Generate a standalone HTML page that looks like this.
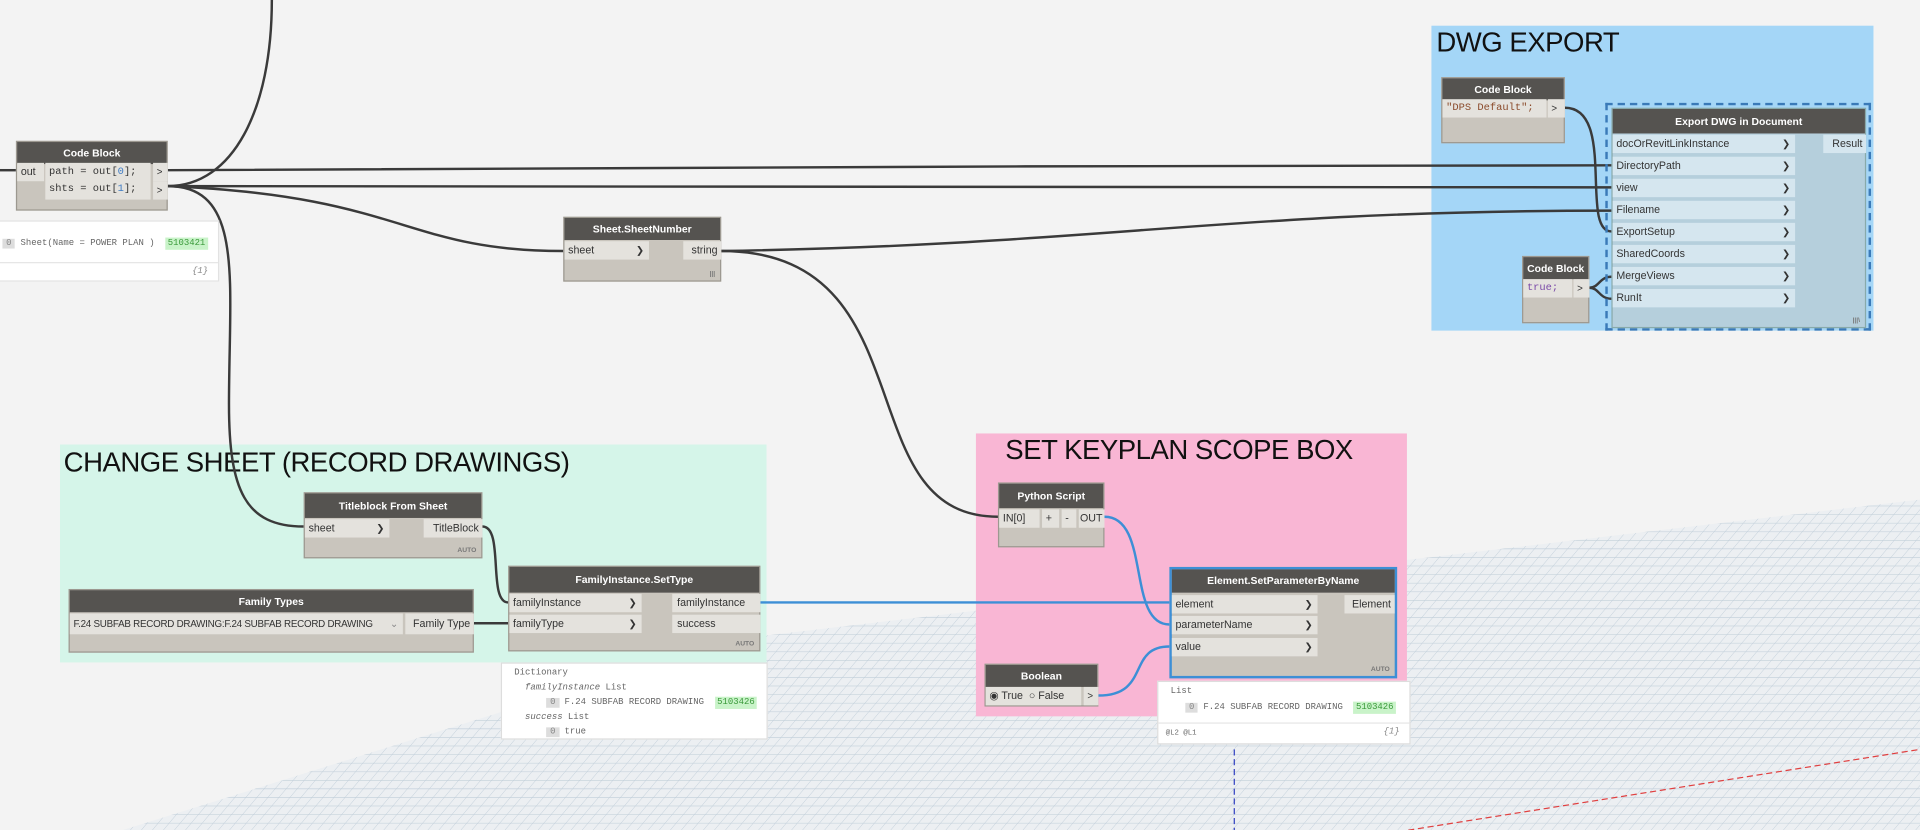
<!DOCTYPE html>
<html><head><meta charset="utf-8"><style>
*{box-sizing:border-box;margin:0;padding:0}
body{width:1920px;height:830px;overflow:hidden;background:#f3f3f3;font-family:"Liberation Sans","DejaVu Sans",sans-serif}
#s{position:absolute;left:0;top:0;width:1568px;height:678px;transform:scale(1.22449);transform-origin:0 0}
.a{position:absolute}
.grp{position:absolute}
.gt{position:absolute;font-size:22.5px;color:#111;white-space:nowrap;letter-spacing:-0.4px}
.n{position:absolute;background:#c9c5bd;border:1px solid #9c9890}
.h{background:#555350;color:#fff;font-weight:bold;font-size:8.5px;text-align:center;height:18px;line-height:18px;white-space:nowrap;overflow:hidden}
.p{position:absolute;background:#e4e2dd;font-size:8.7px;color:#333;line-height:15px;height:15px;padding-left:3px;white-space:nowrap;overflow:hidden}
.ar{position:absolute;right:4px;top:0;font-weight:bold;font-size:8px}
.o{position:absolute;background:#e4e2dd;font-size:8.7px;color:#333;line-height:15px;height:15px;text-align:right;padding-right:3px;white-space:nowrap}
.auto{position:absolute;right:4px;bottom:2px;font-size:5.5px;color:#777;font-weight:bold}
.mono{font-family:"Liberation Mono","DejaVu Sans Mono",monospace}
.pv{position:absolute;background:#fff;border:1px solid #ddd;font-family:"Liberation Mono",monospace;font-size:7.3px;color:#666;white-space:nowrap;overflow:hidden}
.gr{background:#c9f3c9;color:#3a9a3a;padding:1px 2px}
.ix{background:#ddd;color:#888;padding:0 3px}
</style></head><body><div id="s">

<svg class="a" style="left:0;top:0" width="1568" height="678">
<defs><pattern id="g" width="9" height="7" patternUnits="userSpaceOnUse" patternTransform="skewX(-40)"><path d="M0 0H9M0 0V7" stroke="#bfcdd8" stroke-width="0.9" fill="none"/></pattern></defs>
<polygon points="100,678 600,522 1568,408 1568,678" fill="#eceff2"/>
<polygon points="100,678 600,522 1568,408 1568,678" fill="url(#g)"/>
<path d="M1150 678 L1568 612" stroke="#e04040" stroke-width="1" stroke-dasharray="5,3"/>
<path d="M1008 612 V678" stroke="#3040c0" stroke-width="1" stroke-dasharray="5,3"/>
</svg>

<div class="grp" style="left:1169px;top:21px;width:361px;height:249px;background:#a4d6f7"><div class="gt" style="left:4px;top:1px">DWG EXPORT</div></div>
<div class="grp" style="left:49px;top:363px;width:577px;height:178px;background:#d5f5e9"><div class="gt" style="left:3px;top:2px">CHANGE SHEET (RECORD DRAWINGS)</div></div>
<div class="grp" style="left:797px;top:354px;width:352px;height:231px;background:#f9b6d4"><div class="gt" style="left:24px;top:1px">SET KEYPLAN SCOPE BOX</div></div>

<svg class="a" style="left:0;top:0" width="1568" height="678" fill="none" stroke-width="2">
<g stroke="#3a3a3a">
<path d="M222 0 C222 90 190 152 137 152"/>
<path d="M137 152 C200 152 187 230 187 330 C187 400 200 430 248 430"/>
<path d="M0 139 H13"/>
<path d="M137 139 C600 137 900 135 1316 135"/>
<path d="M137 152 C600 152 900 153 1316 153"/>
<path d="M137 152 C330 160 330 205 460 205"/>
<path d="M589 205 C900 200 1000 172 1316 172"/>
<path d="M589 205 C760 205 690 422 815 422"/>
<path d="M1278 88 C1320 88 1290 189 1316 189"/>
<path d="M1298 235 C1306 235 1306 226 1316 226"/>
<path d="M1298 235 C1306 235 1306 244 1316 244"/>
<path d="M394 430 C412 430 398 492 415 492"/>
<path d="M387 509 H415"/>
</g>
<g stroke="#3d8fd6">
<path d="M621 492 H955"/>
<path d="M902 422 C940 422 920 510 955 510"/>
<path d="M897 568 C940 568 920 528 955 528"/>
</g>
</svg>

<div class="n" style="left:13px;top:115px;width:124px;height:57px"><div class="h">Code Block</div>
<div class="p" style="left:0;top:17px;width:22px;height:15px">out</div>
<div class="p mono" style="left:23px;top:17px;width:86px;height:30px;line-height:14px;font-size:8.5px">path = out[<span style="color:#3d7bc4">0</span>];<br>shts = out[<span style="color:#3d7bc4">1</span>];</div>
<div class="p" style="left:111px;top:17px;width:12px;font-size:8px">&gt;</div>
<div class="p" style="left:111px;top:32px;width:12px;font-size:8px">&gt;</div>
</div>
<div class="pv" style="left:-1px;top:180px;width:180px;height:50px;border-color:#e2e2e2">
<div class="a" style="left:2px;top:14px"><span class="ix">0</span> Sheet(Name = POWER PLAN )&nbsp; <span class="gr">5103421</span></div>
<div class="a" style="left:0;top:33px;width:180px;border-top:1px solid #e5e5e5"></div>
<div class="a" style="right:8px;top:37px;color:#888;font-style:italic">{1}</div></div>

<div class="n" style="left:460px;top:177px;width:129px;height:53px"><div class="h">Sheet.SheetNumber</div>
<div class="p" style="left:0;top:19px;width:69px">sheet<span class="ar">❯</span></div>
<div class="o" style="left:97px;top:19px;width:31px">string</div>
<div class="auto">|||</div></div>

<div class="n" style="left:248px;top:402px;width:146px;height:54px"><div class="h" style="height:20px;line-height:20px">Titleblock From Sheet</div>
<div class="p" style="left:0;top:21px;width:69px">sheet<span class="ar">❯</span></div>
<div class="o" style="left:97px;top:21px;width:48px">TitleBlock</div>
<div class="auto">AUTO</div></div>

<div class="n" style="left:56px;top:481px;width:331px;height:52px"><div class="h">Family Types</div>
<div class="p" style="left:0;top:19px;width:272px;height:17px;line-height:17px;font-size:8px;letter-spacing:-0.2px">F.24 SUBFAB RECORD DRAWING:F.24 SUBFAB RECORD DRAWING <span style="position:absolute;right:4px;color:#888">⌄</span></div>
<div class="o" style="left:274px;top:19px;width:56px;height:17px;line-height:17px">Family Type</div></div>

<div class="n" style="left:415px;top:462px;width:206px;height:70px"><div class="h" style="height:21px;line-height:21px">FamilyInstance.SetType</div>
<div class="p" style="left:0;top:22px;width:108px">familyInstance<span class="ar">❯</span></div>
<div class="p" style="left:0;top:39px;width:108px">familyType<span class="ar">❯</span></div>
<div class="o" style="left:133px;top:22px;width:72px;text-align:left;padding-left:4px">familyInstance</div>
<div class="o" style="left:133px;top:39px;width:72px;text-align:left;padding-left:4px">success</div>
<div class="auto">AUTO</div></div>
<div class="pv" style="left:409px;top:541px;width:218px;height:63px;line-height:12px;padding:2px 0 0 10px">Dictionary<br>&nbsp;&nbsp;<i>familyInstance</i> List<br>&nbsp;&nbsp;&nbsp;&nbsp;&nbsp; <span class="ix">0</span> F.24 SUBFAB RECORD DRAWING&nbsp; <span class="gr">5103426</span><br>&nbsp;&nbsp;<i>success</i> List<br>&nbsp;&nbsp;&nbsp;&nbsp;&nbsp; <span class="ix">0</span> true</div>

<div class="n" style="left:1177px;top:63px;width:101px;height:54px"><div class="h">Code Block</div>
<div class="p mono" style="left:0;top:17px;width:85px;color:#8a4a2a;font-size:8.5px">"DPS Default";</div>
<div class="p" style="left:86px;top:17px;width:14px;font-size:8px">&gt;</div></div>

<div class="a" style="left:1311px;top:84px;width:217px;height:186px;border:2px dashed #3a7ab8"></div>
<div class="n" style="left:1316px;top:88px;width:208px;height:180px;background:#b5cfdc;border-color:#8aa"><div class="h" style="height:20px;line-height:20px">Export DWG in Document</div>
<div class="p" style="left:0;top:21px;width:149px;background:#d5e6ef">docOrRevitLinkInstance<span class="ar">❯</span></div>
<div class="p" style="left:0;top:39px;width:149px;background:#d5e6ef">DirectoryPath<span class="ar">❯</span></div>
<div class="p" style="left:0;top:57px;width:149px;background:#d5e6ef">view<span class="ar">❯</span></div>
<div class="p" style="left:0;top:75px;width:149px;background:#d5e6ef">Filename<span class="ar">❯</span></div>
<div class="p" style="left:0;top:93px;width:149px;background:#d5e6ef">ExportSetup<span class="ar">❯</span></div>
<div class="p" style="left:0;top:111px;width:149px;background:#d5e6ef">SharedCoords<span class="ar">❯</span></div>
<div class="p" style="left:0;top:129px;width:149px;background:#d5e6ef">MergeViews<span class="ar">❯</span></div>
<div class="p" style="left:0;top:147px;width:149px;background:#d5e6ef">RunIt<span class="ar">❯</span></div>
<div class="o" style="left:172px;top:21px;width:35px;background:#d5e6ef">Result</div>
<div class="auto">|||\</div></div>

<div class="n" style="left:1243px;top:209px;width:55px;height:55px"><div class="h">Code Block</div>
<div class="p mono" style="left:0;top:18px;width:40px;color:#7a4aa8;font-size:8.5px">true;</div>
<div class="p" style="left:41px;top:18px;width:13px;font-size:8px">&gt;</div></div>

<div class="n" style="left:815px;top:394px;width:87px;height:53px"><div class="h" style="height:20px;line-height:20px">Python Script</div>
<div class="p" style="left:0;top:21px;width:33px">IN[0]</div>
<div class="p" style="left:35px;top:21px;width:14px">+</div>
<div class="p" style="left:51px;top:21px;width:12px">-</div>
<div class="p" style="left:65px;top:21px;width:21px;padding-left:1px">OUT</div></div>

<div class="n" style="left:955px;top:463px;width:186px;height:91px;border:2px solid #3d8fd6"><div class="h" style="height:19px;line-height:19px">Element.SetParameterByName</div>
<div class="p" style="left:0;top:21px;width:119px">element<span class="ar">❯</span></div>
<div class="p" style="left:0;top:38px;width:119px">parameterName<span class="ar">❯</span></div>
<div class="p" style="left:0;top:56px;width:119px">value<span class="ar">❯</span></div>
<div class="o" style="left:141px;top:21px;width:41px">Element</div>
<div class="auto">AUTO</div></div>
<div class="pv" style="left:945px;top:556px;width:207px;height:52px">
<div class="a" style="left:10px;top:4px">List</div>
<div class="a" style="left:22px;top:17px"><span class="ix">0</span> F.24 SUBFAB RECORD DRAWING&nbsp; <span class="gr">5103426</span></div>
<div class="a" style="left:0;top:33px;width:207px;border-top:1px solid #e5e5e5"></div>
<div class="a" style="left:6px;top:38px;font-size:6px">@L2 @L1</div>
<div class="a" style="right:8px;top:37px;color:#888;font-style:italic">{1}</div></div>

<div class="n" style="left:804px;top:542px;width:93px;height:35px"><div class="h">Boolean</div>
<div class="p" style="left:0;top:18px;width:78px">◉ True&nbsp; ○ False</div>
<div class="p" style="left:80px;top:18px;width:12px;font-size:8px">&gt;</div></div>

</div></body></html>
